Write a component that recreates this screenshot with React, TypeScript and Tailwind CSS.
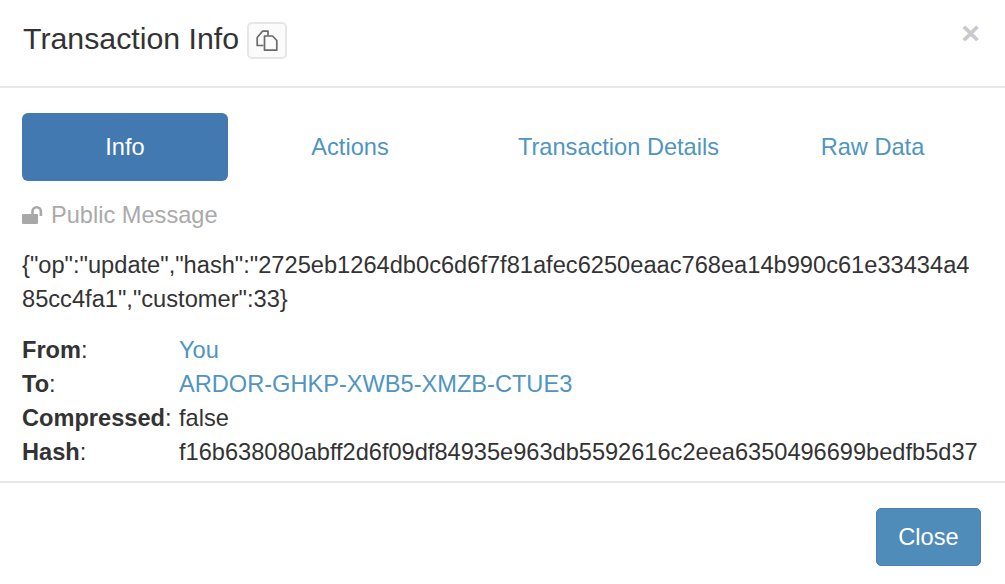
const details = [
	{ label: "From", value: "You", link: true },
	{ label: "To", value: "ARDOR-GHKP-XWB5-XMZB-CTUE3", link: true },
	{ label: "Compressed", value: "false", link: false },
	{
		label: "Hash",
		value: "f16b638080abff2d6f09df84935e963db5592616c2eea6350496699bedfb5d37",
		link: false,
	},
];

const tabs = [
	{ name: "Info", width: "w-[206px]" },
	{ name: "Actions", width: "w-[244px]" },
	{ name: "Transaction Details", width: "w-[293px]" },
	{ name: "Raw Data", width: "w-[215px]" },
];

function CopyIcon() {
	return (
		<svg width="22" height="21" viewBox="0 0 22 21" fill="none" stroke="#6a6a6a" strokeWidth="1.7" strokeLinejoin="round">
			<path d="M7.5 15.5H1.2V7.5L6.5 1.2h5.5v4.3" />
			<path d="M8.5 6h8l4.3 4.5v9.7H8.5z" />
		</svg>
	);
}

function UnlockIcon() {
	return (
		<svg width="23" height="18" viewBox="0 0 23 18" className="shrink-0 mb-[2px]">
			<rect x="0" y="8" width="16" height="10" rx="1" fill="#a8a8a8" />
			<path d="M10.5 9V5.5a4.2 4.2 0 0 1 8.4 0V10" fill="none" stroke="#a8a8a8" strokeWidth="2.6" />
		</svg>
	);
}

export default function App() {
	return (
		<div className="w-[1005px] h-[584px] bg-white overflow-hidden font-['Liberation_Sans',Arial,sans-serif] text-[#333]">
			<header className="h-[88px] border-b-2 border-[#e8e8e8] pl-[23px] pr-6 flex justify-between">
				<div className="flex items-start pt-[21px] gap-2">
					<h4 className="text-[30.3px] leading-[36px] text-[#333]">Transaction Info</h4>
					<button
						type="button"
						className="mt-[1px] w-10 h-[37px] flex items-center justify-center bg-[#fbfbfb] border-2 border-[#e6e6e6] rounded-[5px]"
					>
						<CopyIcon />
					</button>
				</div>
				<span className="pt-[15px] pr-[1px] text-[32px] leading-[36px] font-bold text-[#c9c9c9]">×</span>
			</header>

			<main className="px-[22px] pt-[25px]">
				<nav className="flex">
					{tabs.map((tab, i) => (
						<a
							key={tab.name}
							className={`${tab.width} h-[68px] pt-[2px] flex items-center justify-center text-[23.6px] rounded-[6px] ${
								i === 0 ? "bg-[#4279b0] text-white" : "text-[#5095c1]"
							}`}
						>
							{tab.name}
						</a>
					))}
				</nav>

				<div className="mt-[20px] h-[30px] flex items-center gap-[6px] text-[23.6px] text-[#aaa]">
					<UnlockIcon />
					Public Message
				</div>

				<p className="mt-[17px] text-[23.65px] leading-[34px] break-all text-[#333]">
					{'{"op":"update","hash":"2725eb1264db0c6d6f7f81afec6250eaac768ea14b990c61e33434a4'}
					<br />
					{'85cc4fa1","customer":33}'}
				</p>

				<dl className="mt-[17px] text-[23.6px] leading-[34px]">
					{details.map((row) => (
						<div key={row.label} className="flex">
							<dt className="w-[157px] shrink-0">
								<b>{row.label}</b>:
							</dt>
							<dd className={row.link ? "text-[#5095c1]" : "text-[#333]"}>{row.value}</dd>
						</div>
					))}
				</dl>
			</main>

			<footer className="mt-[12px] border-t-2 border-[#e8e8e8] pt-[25px] pr-6 flex justify-end">
				<button
					type="button"
					className="w-[105px] h-[58px] pt-[1px] rounded-[5px] bg-[#4f8cba] border border-[#4a81ad] text-white text-[23.6px]"
				>
					Close
				</button>
			</footer>
		</div>
	);
}
